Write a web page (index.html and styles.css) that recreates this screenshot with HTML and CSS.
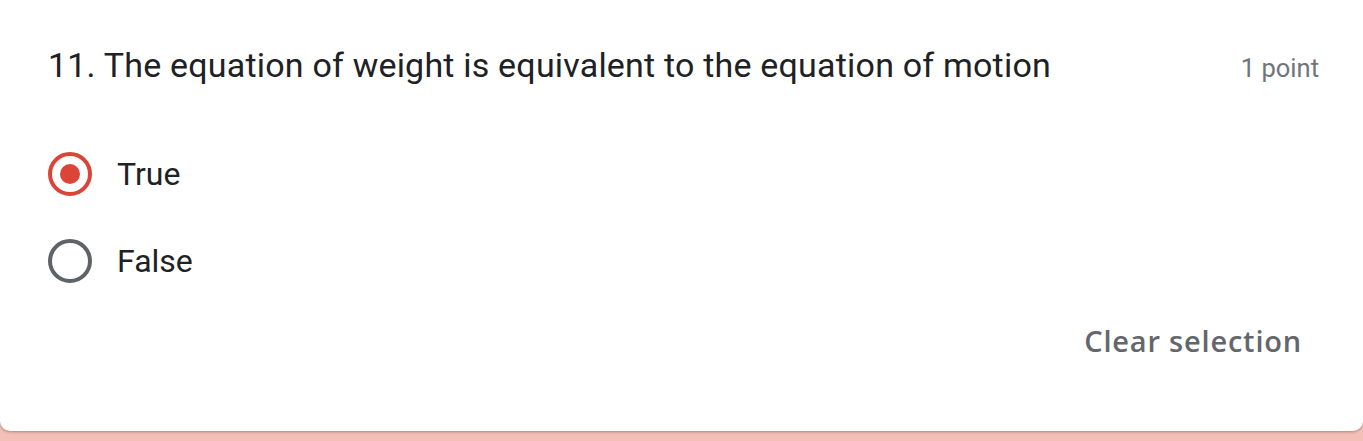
FILE: index.html
```html
<!DOCTYPE html>
<html>
<head>
<meta charset="utf-8">
<link rel="stylesheet" href="styles.css">
</head>
<body>
<div class="card">
  <div class="header">
    <div class="question">11. The equation of weight is equivalent to the equation of motion</div>
    <div class="points">1 point</div>
  </div>
  <div class="options">
    <div class="option">
      <span class="radio checked"></span>
      <span class="label">True</span>
    </div>
    <div class="option">
      <span class="radio"></span>
      <span class="label">False</span>
    </div>
  </div>
  <div class="footer">
    <span class="clear">Clear selection</span>
  </div>
</div>
</body>
</html>
```
FILE: styles.css
```css
html, body {
  margin: 0;
  padding: 0;
  background: #f4bfb7;
  width: 1363px;
  height: 441px;
  overflow: hidden;
}
.card {
  box-sizing: border-box;
  width: 1363px;
  height: 431px;
  background: #fff;
  border-radius: 0 0 10px 10px;
  box-shadow: 0 1px 3px rgba(0,0,0,0.3);
  padding: 43px 44px 0 48px;
  font-family: Roboto, "Liberation Sans", sans-serif;
}
.header {
  display: flex;
  justify-content: space-between;
  align-items: flex-start;
}
.question {
  font-size: 34px;
  line-height: 44px;
  color: #202124;
  letter-spacing: 0.2px;
}
.points {
  font-size: 25.5px;
  line-height: 30px;
  color: #70757a;
  padding-top: 10px;
}
.options {
  display: flex;
  flex-direction: column;
  gap: 43px;
  margin-top: 65px;
}
.option {
  display: flex;
  align-items: center;
  height: 44px;
}
.radio {
  box-sizing: border-box;
  width: 44px;
  height: 44px;
  border-radius: 50%;
  border: 4px solid #5f6368;
  display: flex;
  align-items: center;
  justify-content: center;
}
.radio.checked {
  border-color: #db4437;
}
.radio.checked::after {
  content: "";
  width: 20px;
  height: 20px;
  border-radius: 50%;
  background: #db4437;
}
.label {
  margin-left: 25px;
  font-size: 32px;
  color: #202124;
}
.footer {
  display: flex;
  justify-content: flex-end;
  margin-top: 38px;
  padding-right: 17px;
}
.clear {
  font-family: "Open Sans", Roboto, sans-serif;
  font-weight: 600;
  font-size: 29px;
  color: #63676c;
  letter-spacing: 0.8px;
}
```
